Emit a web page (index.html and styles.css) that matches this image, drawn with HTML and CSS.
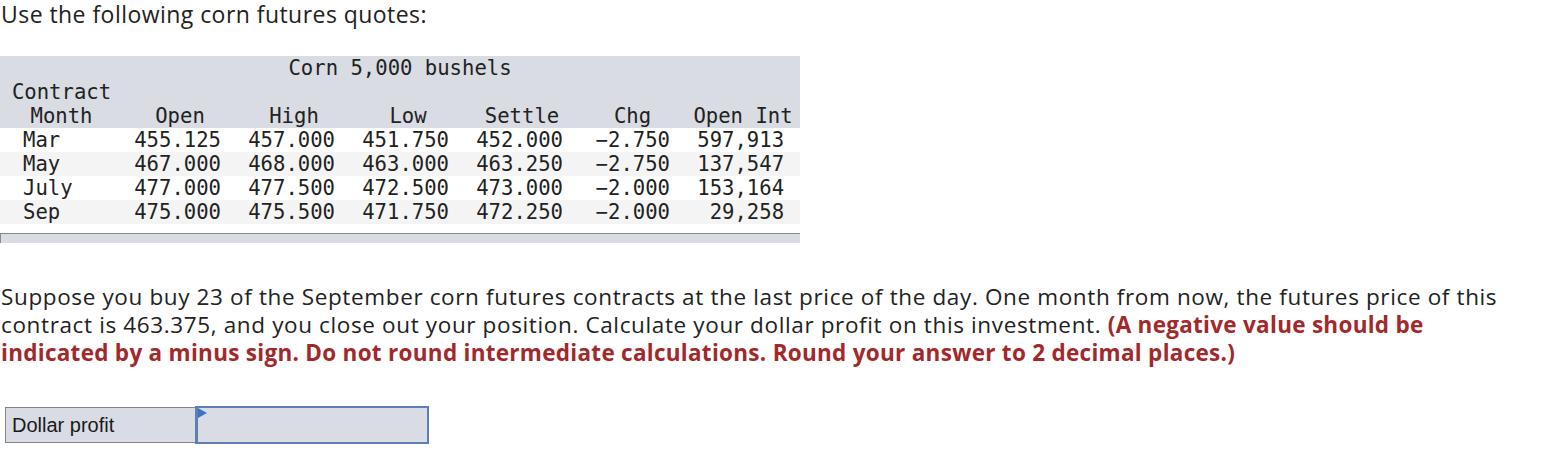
FILE: index.html
```html
<!DOCTYPE html>
<html>
<head>
<meta charset="utf-8">
<link rel="stylesheet" href="styles.css">
</head>
<body>
<p class="title">Use the following corn futures quotes:</p>
<div class="quotes">
  <table class="qt">
    <colgroup>
      <col class="c-month"><col class="c-num"><col class="c-num"><col class="c-num"><col class="c-num"><col class="c-chg"><col class="c-int">
    </colgroup>
    <thead>
      <tr><th colspan="7" class="caption">Corn 5,000 bushels</th></tr>
      <tr><th class="hm">Contract</th><th colspan="6"></th></tr>
      <tr><th class="hm">Month</th><th>Open</th><th>High</th><th>Low</th><th>Settle</th><th>Chg</th><th>Open Int</th></tr>
    </thead>
    <tbody>
      <tr><td class="m">Mar</td><td>455.125</td><td>457.000</td><td>451.750</td><td>452.000</td><td>−2.750</td><td>597,913</td></tr>
      <tr class="alt"><td class="m">May</td><td>467.000</td><td>468.000</td><td>463.000</td><td>463.250</td><td>−2.750</td><td>137,547</td></tr>
      <tr><td class="m">July</td><td>477.000</td><td>477.500</td><td>472.500</td><td>473.000</td><td>−2.000</td><td>153,164</td></tr>
      <tr class="alt"><td class="m">Sep</td><td>475.000</td><td>475.500</td><td>471.750</td><td>472.250</td><td>−2.000</td><td>29,258</td></tr>
    </tbody>
  </table>
  <div class="scrollbar"></div>
</div>
<p class="question">Suppose you buy 23 of the September corn futures contracts at the last price of the day. One month from now, the futures price of this contract is 463.375, and you close out your position. Calculate your dollar profit on this investment. <strong class="hint">(A negative value should be indicated by a minus sign. Do not round intermediate calculations. Round your answer to 2 decimal places.)</strong></p>
<div class="answer">
  <div class="label">Dollar profit</div>
  <div class="input"><span class="flag"></span></div>
</div>
</body>
</html>
```
FILE: styles.css
```css
html, body {
  margin: 0;
  padding: 0;
  background: #fff;
}
body {
  font-family: "Open Sans", "Lato", sans-serif;
  color: #222;
  width: 1544px;
}
.title {
  margin: 0;
  padding: 0 0 0 1px;
  font-size: 23px;
  letter-spacing: 0.45px;
  line-height: 28px;
}
.quotes {
  margin-top: 28px;
  width: 800px;
}
.qt {
  border-collapse: collapse;
  width: 800px;
  table-layout: fixed;
  font-family: "DejaVu Sans Mono", monospace;
  font-size: 20.6px;
  letter-spacing: 0;
  color: #222;
}
.c-month { width: 123px; }
.c-num { width: 114px; }
.c-chg { width: 107px; }
.c-int { width: 114px; }
.qt th, .qt td {
  padding: 0;
  height: 24px;
  line-height: 24px;
  white-space: nowrap;
  font-weight: normal;
}
.qt thead tr { background: #d9dce3; }
.qt th { text-align: center; }
.qt td { text-align: right; padding-right: 16px; }
.qt td.m { text-align: left; padding-left: 23px; padding-right: 0; }
.qt tbody tr { background: #fff; }
.qt tbody tr.alt { background: #f4f4f4; }
.scrollbar {
  margin-top: 9px;
  height: 9px;
  background: #d9dce3;
  border-top: 1px solid #8a8a8a;
  border-left: 1px solid #8a8a8a;
}
.question {
  margin: 40px 0 0 0;
  padding-left: 1px;
  font-size: 22.5px;
  letter-spacing: 0.63px;
  line-height: 28px;
  width: 1512px;
}
.hint {
  color: #a3282b;
  font-weight: bold;
  letter-spacing: 0.28px;
}
.answer {
  display: flex;
  margin: 40px 0 0 5px;
}
.label {
  width: 190px;
  height: 36px;
  box-sizing: border-box;
  background: #d9dce5;
  border: 1px solid #858585;
  border-right: none;
  font-family: "Liberation Sans", Arial, sans-serif;
  font-size: 20px;
  line-height: 34px;
  padding-left: 6px;
  color: #1a1a1a;
}
.input {
  position: relative;
  width: 234px;
  height: 38px;
  margin-top: -1px;
  box-sizing: border-box;
  background: #d9dce5;
  border: 2px solid #5f7fb3;
  border-left-width: 3px;
}
.flag {
  position: absolute;
  left: 0;
  top: 0;
  width: 0;
  height: 0;
  border-top: 5px solid transparent;
  border-bottom: 5px solid transparent;
  border-left: 9px solid #3d72c9;
}
```
